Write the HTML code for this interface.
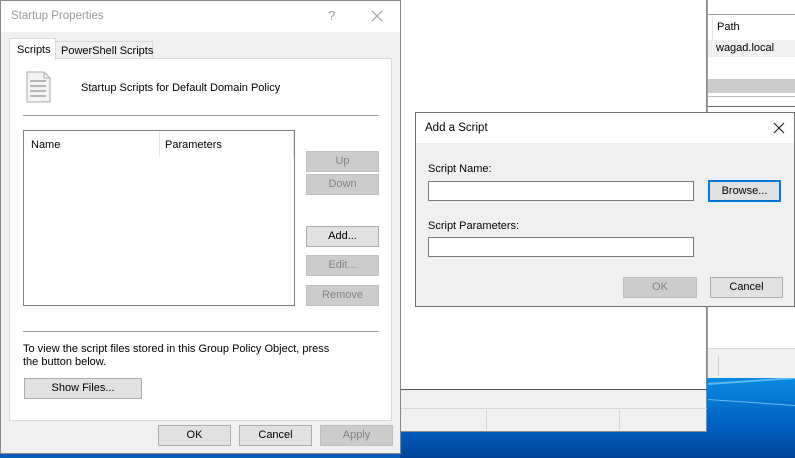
<!DOCTYPE html><html><head><style>
*{box-sizing:border-box;margin:0;padding:0}
body{width:795px;height:458px;overflow:hidden;position:relative;background:#0a5fb4;font-family:"Liberation Sans",sans-serif;font-size:11px;color:#000}
.a{position:absolute;white-space:nowrap}
.btn{position:absolute;background:#e1e1e1;border:1px solid #adadad;text-align:center;font-size:11px;line-height:19px}
.dis{background:#cccccc;border-color:#bfbfbf;color:#838383}
</style></head><body>
<div class="a" style="left:400px;top:378px;width:395px;height:80px;background:linear-gradient(180deg,#0a8ae0,#0060c0 60%,#00449a)"></div>
<div class="a" style="left:708px;top:380px;width:87px;height:2px;background:#7fd0ff;transform:rotate(-4deg);opacity:.7"></div>
<div class="a" style="left:708px;top:402px;width:87px;height:1px;background:#8fd8ff;transform:rotate(4deg);opacity:.7"></div>
<div class="a" style="left:707px;top:0;width:88px;height:378px;background:#fff;border-left:1px solid #a0a0a0"></div>
<div class="a" style="left:708px;top:14px;width:87px;height:1px;background:#a0a0a0"></div>
<div class="a" style="left:712px;top:15px;width:1px;height:25px;background:#e5e5e5"></div>
<div class="a" style="left:717px;top:21px">Path</div>
<div class="a" style="left:708px;top:40px;width:87px;height:17px;background:#f0f0f0"></div>
<div class="a" style="left:716px;top:42px">wagad.local</div>
<div class="a" style="left:708px;top:79px;width:87px;height:14px;background:#cccccc"></div>
<div class="a" style="left:708px;top:96px;width:87px;height:1px;background:#bbb"></div>
<div class="a" style="left:708px;top:106px;width:87px;height:1px;background:#666"></div>
<div class="a" style="left:708px;top:348px;width:87px;height:30px;background:#f0f0f0;border-top:1px solid #ddd"></div>
<div class="a" style="left:718px;top:356px;width:1px;height:20px;background:#ccc"></div>
<div class="a" style="left:400px;top:0;width:307px;height:390px;background:#fff;border-right:1px solid #888"></div>
<div class="a" style="left:400px;top:389px;width:307px;height:1px;background:#555"></div>
<div class="a" style="left:400px;top:390px;width:307px;height:42px;background:#f0f0f0;border-right:1px solid #888;border-bottom:1px solid #888"></div>
<div class="a" style="left:400px;top:408px;width:307px;height:1px;background:#d5d5d5"></div>
<div class="a" style="left:486px;top:410px;width:1px;height:20px;background:#d5d5d5"></div>
<div class="a" style="left:619px;top:410px;width:1px;height:20px;background:#d5d5d5"></div>
<div class="a" style="left:0;top:0;width:401px;height:454px;background:#f0f0f0;border:1px solid #888">
 <div class="a" style="left:0;top:0;width:399px;height:31px;background:#fff"></div>
 <div class="a" style="left:10px;top:9px;color:#999;font-size:11.5px">Startup Properties</div>
 <div class="a" style="left:327px;top:7px;color:#999;font-size:13px">?</div>
 <svg class="a" style="left:370px;top:9px" width="12" height="12"><path d="M1 1L11 11M11 1L1 11" stroke="#999" stroke-width="1.1"/></svg>
 <div class="a" style="left:54px;top:40px;width:98px;height:18px;background:#f0f0f0;border:1px solid #d9d9d9;border-bottom:none;padding:3px 0 0 5px">PowerShell Scripts</div>
 <div class="a" style="left:8px;top:57px;width:383px;height:363px;background:#fff;border:1px solid #d9d9d9"></div>
 <div class="a" style="left:8px;top:37px;width:47px;height:22px;background:#fff;border:1px solid #d9d9d9;border-bottom:none;padding:5px 0 0 7px">Scripts</div>
 <svg class="a" style="left:25px;top:70px" width="26" height="32"><path d="M1 1H18L24 7V31H1Z" fill="#f4f4f4" stroke="#aaa"/><path d="M18 1V7H24" fill="none" stroke="#aaa"/><path d="M4 10H20M4 15H20M4 20H20M4 25H20" stroke="#777"/></svg>
 <div class="a" style="left:80px;top:81px">Startup Scripts for Default Domain Policy</div>
 <div class="a" style="left:22px;top:114px;width:356px;height:1px;background:#a0a0a0"></div>
 <div class="a" style="left:22px;top:129px;width:272px;height:176px;background:#fff;border:1px solid #828282"></div>
 <div class="a" style="left:30px;top:138px">Name</div>
 <div class="a" style="left:158px;top:131px;width:1px;height:25px;background:#e5e5e5"></div>
 <div class="a" style="left:164px;top:138px">Parameters</div>
 <div class="a" style="left:292px;top:131px;width:1px;height:25px;background:#e5e5e5"></div>
 <div class="btn dis" style="left:305px;top:150px;width:73px;height:21px">Up</div>
 <div class="btn dis" style="left:305px;top:173px;width:73px;height:21px">Down</div>
 <div class="btn" style="left:305px;top:225px;width:73px;height:21px">Add...</div>
 <div class="btn dis" style="left:305px;top:254px;width:73px;height:21px">Edit...</div>
 <div class="btn dis" style="left:305px;top:284px;width:73px;height:21px">Remove</div>
 <div class="a" style="left:22px;top:330px;width:356px;height:1px;background:#a0a0a0"></div>
 <div class="a" style="left:22px;top:342px;line-height:13px">To view the script files stored in this Group Policy Object, press<br>the button below.</div>
 <div class="btn" style="left:23px;top:377px;width:118px;height:21px">Show Files...</div>
 <div class="btn" style="left:157px;top:424px;width:73px;height:21px">OK</div>
 <div class="btn" style="left:238px;top:424px;width:73px;height:21px">Cancel</div>
 <div class="btn dis" style="left:319px;top:424px;width:73px;height:21px">Apply</div>
</div>
<div class="a" style="left:415px;top:112px;width:380px;height:195px;background:#f0f0f0;border:1px solid #707070">
 <div class="a" style="left:0;top:0;width:378px;height:30px;background:#fff"></div>
 <div class="a" style="left:9px;top:9px;font-size:11.5px">Add a Script</div>
 <svg class="a" style="left:357px;top:9px" width="12" height="12"><path d="M1 1L11 11M11 1L1 11" stroke="#222" stroke-width="1.1"/></svg>
 <div class="a" style="left:12px;top:50px">Script Name:</div>
 <div class="a" style="left:12px;top:68px;width:266px;height:20px;background:#fff;border:1px solid #7a7a7a"></div>
 <div class="btn" style="left:292px;top:67px;width:73px;height:22px;border:2px solid #0078d7;line-height:18px">Browse...</div>
 <div class="a" style="left:12px;top:107px">Script Parameters:</div>
 <div class="a" style="left:12px;top:124px;width:266px;height:20px;background:#fff;border:1px solid #7a7a7a"></div>
 <div class="btn dis" style="left:207px;top:164px;width:74px;height:21px">OK</div>
 <div class="btn" style="left:294px;top:164px;width:73px;height:21px">Cancel</div>
</div>
</body></html>
